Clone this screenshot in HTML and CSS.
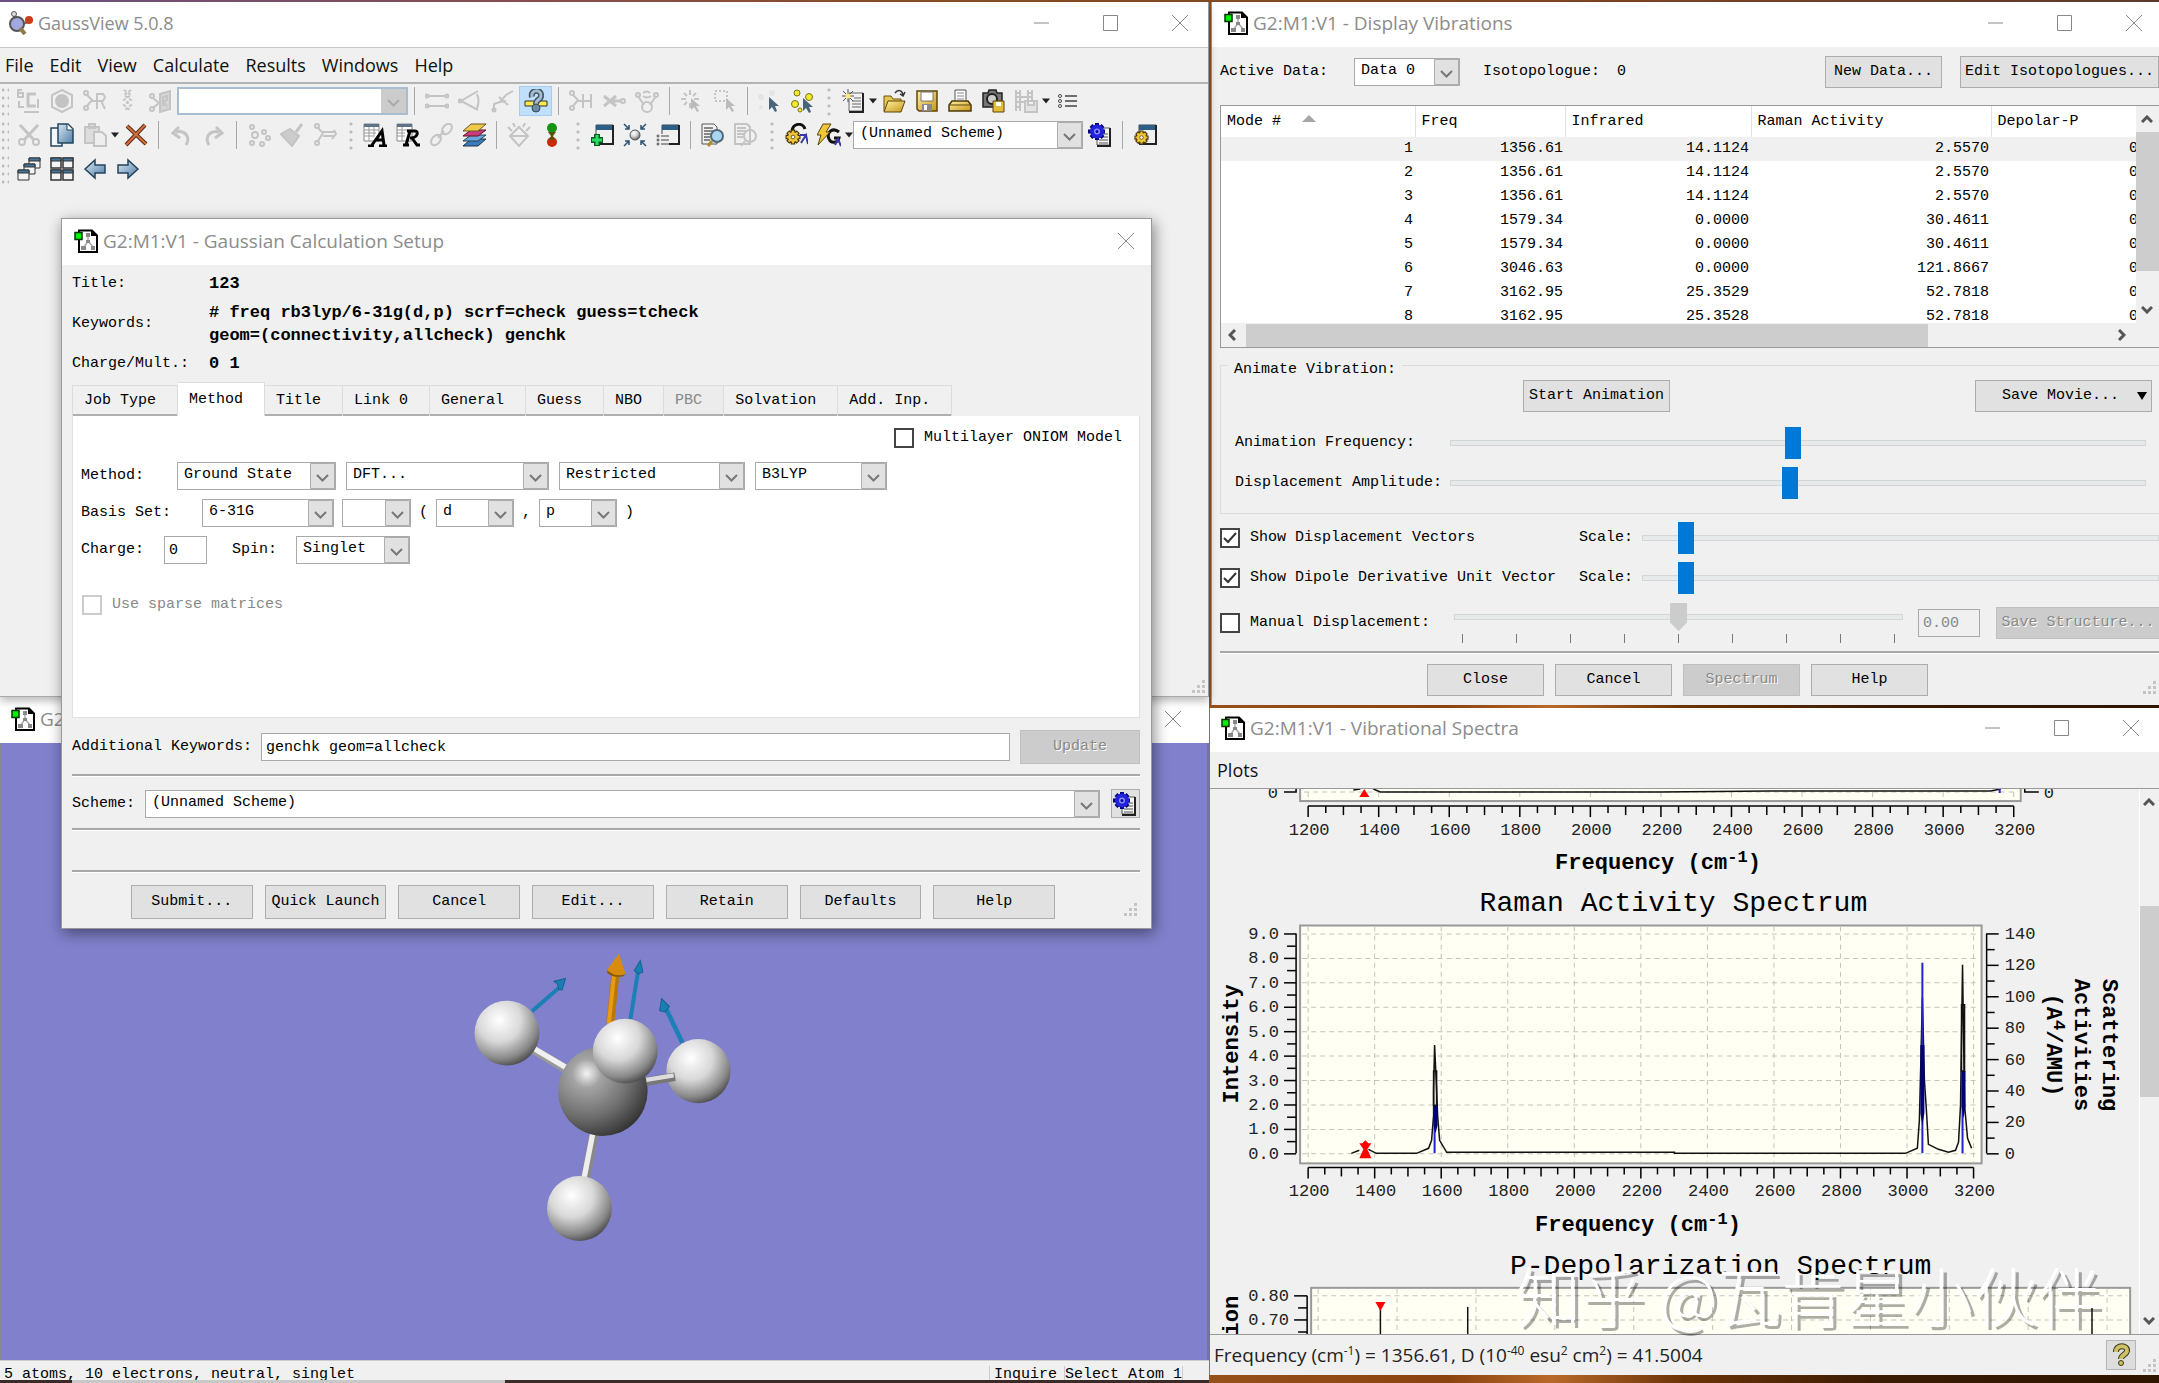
FILE: index.html
```html
<!DOCTYPE html>
<html lang="en">
<head>
<meta charset="utf-8">
<title>GaussView 5.0.8</title>
<link rel="stylesheet" href="styles.css">
</head>
<body>
<svg class="defs" aria-hidden="true">
  <defs>
    <radialGradient id="hyd" cx=".38" cy=".3" r=".75"><stop offset="0" stop-color="#fff"/><stop offset=".45" stop-color="#d8d8d8"/><stop offset=".8" stop-color="#888"/><stop offset="1" stop-color="#444"/></radialGradient>
    <radialGradient id="car" cx=".32" cy=".3" r=".8"><stop offset="0" stop-color="#f4f4f4"/><stop offset=".2" stop-color="#a4a4a4"/><stop offset=".6" stop-color="#707070"/><stop offset="1" stop-color="#2c2c2c"/></radialGradient>
    <linearGradient id="blue" x2="1" y2="1"><stop offset="0" stop-color="#dbe7f3"/><stop offset="1" stop-color="#4f7fa8"/></linearGradient>
    <linearGradient id="gold" x2="1" y2="1"><stop offset="0" stop-color="#fff2a0"/><stop offset="1" stop-color="#c9951c"/></linearGradient>
  </defs>
  <symbol id="doc" viewBox="0 0 24 24"><path d="M5 1.500h13l5 5V23H5z" fill="#fff" stroke="#000" stroke-width="2"/><path d="M17 1l6 6h-6z" fill="#000"/><path d="M14 6v7M14 12l-4 6M14 12l5 6" stroke="#aaa" stroke-width="1.500"/><path d="M12 4h4v4h-4zM12 11h4v3h-4zM7 17h5v4H7zM17 17h4v4h-4z" fill="#888"/><path d="M1 3.500h7v7H1z" fill="#0e0" stroke="#030" stroke-width="1.500"/></symbol>
  <symbol id="gear" viewBox="0 0 24 24"><path d="M12 2v20M2 12h20M5 5l14 14M19 5L5 19" stroke="#43360a" stroke-width="6"/><circle cx="12" cy="12" r="8" fill="#43360a"/><path d="M12 3.500v17M3.500 12h17M6 6l12 12M18 6L6 18" stroke="#e8bc2c" stroke-width="3"/><circle cx="12" cy="12" r="6.500" fill="#f0c63a"/><circle cx="12" cy="12" r="2.500" fill="#fff" stroke="#43360a"/></symbol>
  <symbol id="scheme" viewBox="0 0 24 24"><path d="M9 5h13v17H9z" fill="#f4f4f4" stroke="#555"/><path d="M22 5v18H9" fill="none" stroke="#222" stroke-width="2"/><path d="M11 11h9M11 14h9M11 17h9M11 20h9" stroke="#555"/><path d="M9 0v17M0 8.500h17M3 2.500l12 12M15 2.500l-12 12" stroke="#00007c" stroke-width="4"/><circle cx="9" cy="8.500" r="7" fill="#2222dd"/><circle cx="9" cy="8.500" r="3" fill="#8d8dff"/><circle cx="9" cy="8.500" r="1.500" fill="#0000a0"/></symbol>
  <symbol id="win" viewBox="0 0 24 24"><path d="M6 2h17v19H6z" fill="#f1f1f1" stroke="#444"/><path d="M6 2h17v5H6z" fill="#2d5f86"/><path d="M23 2v19H6" fill="none" stroke="#222" stroke-width="2"/></symbol>
  <symbol id="min" viewBox="0 0 16 16"><path d="M0 8h15" stroke="#888"/></symbol>
  <symbol id="max" viewBox="0 0 16 16"><path d="M.5.5h14v15H.5z" fill="none" stroke="#888"/></symbol>
  <symbol id="close" viewBox="0 0 16 16"><path d="M0 0l16 16M16 0L0 16" stroke="#888"/></symbol>
  <symbol id="grip" viewBox="0 0 14 14"><path d="M10 0h3v3h-3zM10 5h3v3h-3zM5 5h3v3H5zM10 10h3v3h-3zM5 10h3v3H5zM0 10h3v3H0z" fill="#c4c4c4"/></symbol>
  <symbol id="down" viewBox="0 0 10 8"><path d="M0 1h10L5 7z" fill="#222"/></symbol>
</svg>

<main class="desktop">
  <div class="column left-column">
    <section class="window main-window">
      <header class="titlebar">
        <svg class="app-icon" viewBox="0 0 24 24"><path d="M5 4l3 5M14 13l7-3" stroke="#666" stroke-width="2"/><circle cx="5" cy="3" r="2.500" fill="#ddd" stroke="#555"/><circle cx="8" cy="13" r="7" fill="#a3a8e0" stroke="#555" stroke-width="2"/><circle cx="20" cy="9" r="4" fill="#c93d17"/><path d="M11 17l5 6" stroke="#8d7a48" stroke-width="4"/></svg>
        <h1>GaussView 5.0.8</h1>
        <div class="controls"><button aria-label="Minimize"><svg><use href="#min"/></svg></button><button aria-label="Maximize"><svg><use href="#max"/></svg></button><button aria-label="Close"><svg><use href="#close"/></svg></button></div>
      </header>
      <nav class="menubar"><button>File</button><button>Edit</button><button>View</button><button>Calculate</button><button>Results</button><button>Windows</button><button>Help</button></nav>
      <div class="toolbars">
        <div class="toolbar">
          <i class="handle first"></i>
          <button class="tool off" aria-label="Element"><svg viewBox="0 0 24 24"><path d="M5 1H1v7h5V4H1"/><path d="M19 5h-8v12h8" stroke-width="3"/><path d="M2 12v7M2 18h5M21 10v9M7 23h15"/></svg></button>
          <button class="tool off" aria-label="Ring"><svg viewBox="0 0 24 24"><path d="M12 1l10 5v12l-10 5-10-5V6z"/><circle cx="12" cy="12" r="6" fill="#c4c4c4"/></svg></button>
          <button class="tool off" aria-label="R group"><svg viewBox="0 0 24 24"><circle cx="3" cy="4" r="2"/><circle cx="3" cy="19" r="2"/><path d="M4 6l5 5-5 6M8 12h5M14 20V5h6l2 3-2 4h-6M18 12l4 8"/></svg></button>
          <button class="tool off" aria-label="Fragment"><svg viewBox="0 0 24 24"><path d="M8 1l7 5-7 5 7 5-7 6M15 1L8 6l7 5-7 5 7 6" stroke-dasharray="3 2"/></svg></button>
          <button class="tool off" aria-label="Library"><svg viewBox="0 0 24 24"><path d="M11 5l10-3v18l-10 3z" fill="#d5d5d5"/><circle cx="3" cy="7" r="2"/><circle cx="3" cy="20" r="2"/><path d="M4 9l6 5-6 5M14 17V8l4-1v4l-4 2 4 4"/></svg></button>
          <select class="combo fragment" aria-label="Fragment name" disabled><option></option></select>
          <i class="sep"></i>
          <button class="tool off" aria-label="Bond"><svg viewBox="0 0 24 24"><circle cx="2" cy="7" r="1.500"/><circle cx="22" cy="7" r="1.500"/><circle cx="2" cy="17" r="1.500"/><circle cx="22" cy="17" r="1.500"/><path d="M4 7h16M4 17h16"/></svg></button>
          <button class="tool off" aria-label="Angle"><svg viewBox="0 0 24 24"><path d="M20 2L3 12l17 9M19 5q3 7 0 14"/><circle cx="2" cy="12" r="1.500"/></svg></button>
          <button class="tool off" aria-label="Dihedral"><svg viewBox="0 0 24 24"><path d="M3 21V15l6-2 6-7 7-4M8 8l9 8M9 13l6-1"/><circle cx="3" cy="21" r="1.500"/></svg></button>
          <button class="tool active" aria-label="Inquire"><svg viewBox="0 0 24 24"><path d="M1 12h22v5H1z" fill="#ffe94b" stroke="#333"/><path d="M8 8c-2-8 10-8 9-1 0 4-5 3-5 8" fill="none" stroke="#3d5568" stroke-width="6"/><path d="M8 8c-2-8 10-8 9-1 0 4-5 3-5 8" fill="none" stroke="#a9bccb" stroke-width="3"/><circle cx="12" cy="19" r="4" fill="#6d8ba3" stroke="#31485a"/></svg></button>
          <i class="sep"></i>
          <button class="tool off" aria-label="Add valence"><svg viewBox="0 0 24 24"><circle cx="3" cy="4" r="2"/><circle cx="3" cy="19" r="2"/><path d="M4 6l5 5-5 6M8 12h5M14 5v14M22 5v14M14 12h8"/></svg></button>
          <button class="tool off" aria-label="Delete atom"><svg viewBox="0 0 24 24"><path d="M2 7l12 10M14 7L2 17M8 12h11" stroke-width="3"/><circle cx="21" cy="12" r="2"/></svg></button>
          <button class="tool off" aria-label="Invert"><svg viewBox="0 0 24 24"><path d="M3 7l6 9M21 7l-6 9M8 4q4-3 7 0M16 7q-4 3-8 0"/><circle cx="3" cy="6" r="2"/><circle cx="21" cy="6" r="2"/><circle cx="12" cy="18" r="5"/></svg></button>
          <i class="sep"></i>
          <button class="tool off" aria-label="Select atom"><svg viewBox="0 0 24 24"><path d="M10 1v5M10 14v5M1 10h5M14 10h5M4 4l3 3M16 4l-3 3M4 16l3-3"/><path d="M11 9v12l3-3 3 5 2-1-3-5h4z" fill="#bbb" stroke="none"/></svg></button>
          <button class="tool off" aria-label="Select area"><svg viewBox="0 0 24 24"><path d="M2 2h12v10H2z" stroke-dasharray="2 2"/><path d="M13 9v12l3-3 3 5 2-1-3-5h4z" fill="#bbb" stroke="none"/></svg></button>
          <i class="sep"></i>
          <button class="tool" aria-label="Deselect atoms"><svg viewBox="0 0 24 24"><circle cx="3" cy="8" r="3" fill="#e4e4e4"/><circle cx="14" cy="4" r="3" fill="#e4e4e4"/><circle cx="3" cy="18" r="2" fill="#e4e4e4"/><path d="M11 8v13l3-3 3 5 2-1-2-5h4z" fill="#48647b"/></svg></button>
          <button class="tool" aria-label="Select all"><svg viewBox="0 0 24 24"><g fill="#f3ea2c" stroke="#77731c"><circle cx="6" cy="4" r="3"/><circle cx="18" cy="8" r="3.500"/><circle cx="4" cy="15" r="3.500"/><circle cx="9" cy="21" r="2"/></g><path d="M12 9v13l3-3 3 5 2-1-2-5h4z" fill="#48647b"/></svg></button>
          <i class="handle"></i>
          <button class="tool" aria-label="New"><svg viewBox="0 0 24 24"><path d="M8 4h14v18H8z" fill="#f2f2f2" stroke="#666"/><path d="M22 4v19H8" fill="none" stroke="#222" stroke-width="2"/><path d="M13 9h7M11 12h9M11 15h9M11 18h9" stroke="#666"/><path d="M7 0v13M1 7h12M2 2l10 10M12 2L2 12" stroke="#555"/><circle cx="7" cy="7" r="2.500" fill="#ffe97b"/></svg></button>
          <svg class="drop"><use href="#down"/></svg>
          <button class="tool" aria-label="Open"><svg viewBox="0 0 24 24"><path d="M2 7h7l2 3h8v12H2z" fill="#e6c550" stroke="#6b520c"/><path d="M6 12h17l-4 11H2z" fill="url(#gold)" stroke="#5b4508"/><path d="M13 4c3-4 7-3 8 2M18 5l3 2 2-4" fill="none" stroke="#333" stroke-width="1.500"/></svg></button>
          <button class="tool" aria-label="Save"><svg viewBox="0 0 24 24"><path d="M2 2h20v20H4l-2-2z" fill="url(#gold)" stroke="#5b4508" stroke-width="1.500"/><path d="M6 3h12v9H6z" fill="#fff" stroke="#777"/><path d="M7 15h10v7H7z" fill="#888"/><path d="M9 16h3v5H9z" fill="#fff"/></svg></button>
          <button class="tool" aria-label="Print"><svg viewBox="0 0 24 24"><path d="M7 1h11v13H7z" fill="#fff" stroke="#555"/><path d="M9 4h7M9 7h7M9 10h7" stroke="#888"/><path d="M4 12h16l3 4v6H1v-6z" fill="url(#gold)" stroke="#4b3a0a" stroke-width="1.500"/><path d="M2 16h20" stroke="#5b4508"/></svg></button>
          <button class="tool" aria-label="Save image"><svg viewBox="0 0 24 24"><path d="M2 4h5l1-3h7l1 3h5v14H2z" fill="#777" stroke="#222" stroke-width="1.500"/><circle cx="11" cy="10" r="5" fill="#ccc" stroke="#222" stroke-width="2"/><path d="M12 12h11v11H12z" fill="#e4bd3a" stroke="#5b4508"/><path d="M15 13h5v4h-5z" fill="#fff"/></svg></button>
          <button class="tool off" aria-label="Save movie"><svg viewBox="0 0 24 24"><path d="M2 1v21M6 1v21M14 1v12M18 1v10M2 4h4M2 8h16M2 13h9M2 18h4M14 4h4"/><path d="M11 12h12v11H11zM14 12v4h6v-4" fill="#e4e4e4"/></svg></button>
          <svg class="drop"><use href="#down"/></svg>
          <button class="tool" aria-label="Preferences"><svg viewBox="0 0 24 24"><path d="M10 7h12M10 12h12M10 17h12" stroke="#444" stroke-width="1.500"/><g fill="#fff" stroke="#444"><circle cx="5" cy="7" r="1.500"/><circle cx="5" cy="12" r="1.500"/><circle cx="5" cy="17" r="1.500"/></g></svg></button>
        </div>
        <div class="toolbar">
          <i class="handle first"></i>
          <button class="tool off" aria-label="Cut"><svg viewBox="0 0 24 24"><path d="M3 2l14 15M21 2L7 17" stroke-width="3"/><circle cx="5" cy="19" r="3"/><circle cx="19" cy="19" r="3"/></svg></button>
          <button class="tool" aria-label="Copy"><svg viewBox="0 0 24 24"><path d="M1 5h11v18H1z" fill="#f3f8fc" stroke="#24435c" stroke-width="1.500"/><path d="M8 1h10l5 5v14H8z" fill="url(#blue)" stroke="#24435c" stroke-width="1.500"/><path d="M17 1v6h6" fill="#fff" stroke="#24435c"/></svg></button>
          <button class="tool off" aria-label="Paste"><svg viewBox="0 0 24 24"><path d="M2 4h14v16H2zM6 1h6v4H6z" fill="#ddd"/><path d="M11 9h8l4 4v10H11z" fill="#eee"/></svg></button>
          <svg class="drop"><use href="#down"/></svg>
          <button class="tool" aria-label="Delete"><svg viewBox="0 0 24 24"><path d="M3 3l19 18M21 2L2 22" stroke="#5d2c14" stroke-width="4"/><path d="M3 3l19 18M21 2L2 22" stroke="#d0703f" stroke-width="2"/></svg></button>
          <i class="sep"></i>
          <button class="tool off" aria-label="Undo"><svg viewBox="0 0 24 24"><path d="M17 22c5-8-1-15-10-13M10 4L4 10l7 5" stroke-width="3"/></svg></button>
          <button class="tool off" aria-label="Redo"><svg viewBox="0 0 24 24"><path d="M7 22C2 14 8 7 17 9M14 4l6 6-7 5" stroke-width="3"/></svg></button>
          <i class="sep"></i>
          <button class="tool off" aria-label="Clean"><svg viewBox="0 0 24 24"><circle cx="5" cy="4" r="2"/><circle cx="8" cy="12" r="3"/><circle cx="17" cy="9" r="2"/><circle cx="21" cy="15" r="2"/><circle cx="5" cy="20" r="2"/><circle cx="15" cy="21" r="2"/></svg></button>
          <button class="tool off" aria-label="Brush"><svg viewBox="0 0 24 24"><path d="M22 1l-6 8" stroke-width="3"/><path d="M10 6l9 7-7 10L1 11z" fill="#ccc"/></svg></button>
          <button class="tool off" aria-label="Symmetrize"><svg viewBox="0 0 24 24"><circle cx="4" cy="3" r="2"/><circle cx="4" cy="20" r="2"/><path d="M5 5l5 5-5 8M10 9h11M10 13h11M21 7l2 4-4 5"/></svg></button>
          <i class="handle"></i>
          <button class="tool" aria-label="Atom list"><svg viewBox="0 0 24 24"><path d="M1 1h15v17H1z" fill="#fff" stroke="#888"/><path d="M1 1h15v3H1z" fill="#5f7386"/><path d="M1 7h15M1 10h12M1 13h11M6 4v14M11 4v8" stroke="#999"/><path d="M5 23h6M9 22L19 8l2 14M12 17h9M16 23h8" stroke="#000" stroke-width="3" fill="none"/></svg></button>
          <button class="tool" aria-label="Redundant coordinates"><svg viewBox="0 0 24 24"><path d="M1 1h15v17H1z" fill="#fff" stroke="#888"/><path d="M1 1h15v3H1z" fill="#5f7386"/><path d="M1 7h15M1 10h8M1 13h8M6 4v14" stroke="#999"/><path d="M10 22l4-14h5c4 0 3 7-5 7M16 15l5 7h3M7 22h6M11 8h4" stroke="#000" stroke-width="3" fill="none"/></svg></button>
          <button class="tool off" aria-label="Connection"><svg viewBox="0 0 24 24"><ellipse cx="18" cy="6" rx="4" ry="6" transform="rotate(40 18 6)"/><ellipse cx="7" cy="17" rx="4" ry="6" transform="rotate(40 7 17)"/><path d="M9 15l6-7"/></svg></button>
          <button class="tool" aria-label="MO layers"><svg viewBox="0 0 24 24"><path d="M9 16h15l-8 7H1z" fill="#3b7bbb" stroke="#234"/><path d="M9 12h15l-8 6H1z" fill="#6ba5dc" stroke="#245"/><path d="M9 7h15l-8 6H1z" fill="#c93d7e" stroke="#612"/><path d="M9 1h15l-8 7H1z" fill="#eeca48" stroke="#652"/></svg></button>
          <i class="sep"></i>
          <button class="tool off" aria-label="Symmetry"><svg viewBox="0 0 24 24"><path d="M12 4l9 9-9 10-9-10zM3 13h18M1 4l4 4M23 4l-4 4M6 0l2 4M18 0l-2 4"/></svg></button>
          <button class="tool" aria-label="Orbitals"><svg viewBox="0 0 24 24"><circle cx="12" cy="5" r="5" fill="#149414"/><circle cx="12" cy="19" r="5" fill="#c92a0c"/><path d="M8 9h8l-3 4 2 4H9l2-4z" fill="#58520c"/></svg></button>
          <i class="handle"></i>
          <button class="tool" aria-label="Add view"><svg viewBox="0 0 24 24"><use href="#win"/><path d="M7 11v12M1 17h12" stroke="#075a20" stroke-width="6"/><path d="M7 12v10M2 17h10" stroke="#2bdc65" stroke-width="3"/></svg></button>
          <button class="tool" aria-label="Center"><svg viewBox="0 0 24 24"><circle cx="12" cy="12" r="5" fill="url(#hyd)" stroke="#555"/><path d="M1 1l5 5M23 1l-5 5M1 23l5-5M23 23l-5-5M6 2v4H2M18 2v4h4M6 22v-4H2M18 22v-4h4" stroke="#2d5270" stroke-width="1.500" fill="none"/></svg></button>
          <button class="tool" aria-label="View list"><svg viewBox="0 0 24 24"><use href="#win"/><path d="M0 11h13v13H0z" fill="#efefef"/><path d="M5 13h8M5 17h8M5 21h8" stroke="#444"/><g fill="#fff" stroke="#444"><circle cx="2" cy="13" r="1"/><circle cx="2" cy="17" r="1"/><circle cx="2" cy="21" r="1"/></g></svg></button>
          <i class="sep"></i>
          <button class="tool" aria-label="View file"><svg viewBox="0 0 24 24"><path d="M1 1h12l3 3v17H1z" fill="#f2f2f2" stroke="#555"/><path d="M3 5h9M3 8h10M3 11h8M3 14h6M3 17h6" stroke="#666" stroke-width="1.500"/><circle cx="16" cy="13" r="6" fill="#a9d6ee" stroke="#51697b" stroke-width="2"/><path d="M11 18l-4 5" stroke="#b08c26" stroke-width="3"/></svg></button>
          <button class="tool off" aria-label="View results"><svg viewBox="0 0 24 24"><path d="M1 1h12l3 3v17H1zM3 5h9M3 8h10M3 11h8M3 14h6"/><circle cx="16" cy="13" r="6"/><path d="M11 18l-4 5"/></svg></button>
          <i class="handle"></i>
          <button class="tool" aria-label="Calculation setup"><svg viewBox="0 0 24 24"><path d="M21 6C19-1 9 0 8 8" fill="none" stroke="#111" stroke-width="3"/><svg y="5" width="18" height="18"><use href="#gear"/></svg><path d="M16 12h7M17 20l5-8 2 9" fill="none" stroke="#3738a8" stroke-width="2"/></svg></button>
          <button class="tool" aria-label="Quick launch"><svg viewBox="0 0 24 24"><path d="M22 9c-6-5-13 0-10 7 2 5 9 4 10-1h-5" fill="none" stroke="#111" stroke-width="3"/><path d="M6 1h8l-5 8h4L1 22l3-10H0z" fill="#f0c63a" stroke="#5b4508"/><path d="M18 22l3-6 3 7" fill="none" stroke="#3738a8" stroke-width="2"/></svg></button>
          <svg class="drop"><use href="#down"/></svg>
          <select class="combo toolbar-scheme" aria-label="Scheme"><option>(Unnamed Scheme)</option></select>
          <button class="tool" aria-label="Edit schemes"><svg><use href="#scheme"/></svg></button>
          <i class="sep"></i>
          <button class="tool" aria-label="Jobs"><svg viewBox="0 0 24 24"><use href="#win"/><svg y="6" width="17" height="17"><use href="#gear"/></svg></svg></button>
        </div>
        <div class="toolbar">
          <i class="handle first"></i>
          <button class="tool" aria-label="Cascade"><svg viewBox="0 0 24 24"><g fill="#f4f4f4" stroke="#333"><path d="M12 1h11v10H12z"/><path d="M7 7h11v10H7z"/><path d="M1 13h11v10H1z"/></g><path d="M12 1h11v3H12zM7 7h11v3H7zM1 13h11v3H1z" fill="#44769c" stroke="#333"/></svg></button>
          <button class="tool" aria-label="Tile"><svg viewBox="0 0 24 24"><path d="M1 1h10v10H1zM13 1h10v10H13zM1 13h10v10H1zM13 13h10v10H13z" fill="#f4f4f4" stroke="#333" stroke-width="1.500"/><path d="M1 1h10v3H1zM13 1h10v3H13zM1 13h10v3H1zM13 13h10v3H13z" fill="#44769c" stroke="#333"/></svg></button>
          <button class="tool" aria-label="Previous"><svg viewBox="0 0 24 24"><path d="M2 12l10-9v5h10v8H12v5z" fill="url(#blue)" stroke="#24435c" stroke-width="1.500"/></svg></button>
          <button class="tool" aria-label="Next"><svg viewBox="0 0 24 24"><path d="M22 12L12 3v5H2v8h10v5z" fill="url(#blue)" stroke="#24435c" stroke-width="1.500"/></svg></button>
        </div>
      </div>
      <svg class="size-grip"><use href="#grip"/></svg>
    </section>

    <section class="window view-window">
      <header class="titlebar">
        <svg class="app-icon"><use href="#doc"/></svg>
        <h2>G2</h2>
        <div class="controls"><button aria-label="Close"><svg><use href="#close"/></svg></button></div>
      </header>
      <div class="scene">
        <svg viewBox="0 0 1209 616" preserveAspectRatio="xMidYMid slice" role="img" aria-label="Methane molecule">
          <svg x="440" y="185" width="320" height="330" viewBox="0 0 960 990">
            <path d="M278 248l80-70" stroke="#1c7fb5" stroke-width="12"/><path d="M378 150l-34 8 10 8 4 16 10 2z" fill="#1a7eb5" stroke="#13628f" stroke-width="3"/>
            <path d="M572 275l24-150" stroke="#1c7fb5" stroke-width="12"/><path d="M602 96l-18 30 12 10 14-6z" fill="#1a7eb5" stroke="#13628f" stroke-width="3"/>
            <path d="M728 342l-50-104" stroke="#1c7fb5" stroke-width="14"/><path d="M666 210l-6 36 16 4 13-16z" fill="#1a7eb5" stroke="#13628f" stroke-width="3"/>
            <path d="M512 284l16-150" stroke="#b87708" stroke-width="24"/><path d="M508 284l16-150" stroke="#e89a12" stroke-width="12"/><path d="M538 76l-36 48q26 24 56 12z" fill="#d88c0e"/><path d="M502 124q26 24 56 12l-8 8q-30 4-46-10z" fill="#8b5900"/>
            <path d="M278 360l100 60" stroke="#999" stroke-width="26"/><path d="M280 357l98 58" stroke="#f0f0f0" stroke-width="16"/>
            <path d="M464 612l-26 134" stroke="#888" stroke-width="28"/><path d="M460 612l-26 134" stroke="#eee" stroke-width="16"/>
            <circle cx="490" cy="487" r="134" fill="url(#car)"/>
            <circle cx="203" cy="313" r="97" fill="url(#hyd)"/>
            <circle cx="776" cy="427" r="96" fill="url(#hyd)"/>
            <path d="M620 458l86-14" stroke="#777" stroke-width="26"/><path d="M620 453l82-13" stroke="#ddd" stroke-width="13"/>
            <circle cx="557" cy="367" r="97" fill="url(#hyd)"/>
            <circle cx="420" cy="838" r="97" fill="url(#hyd)"/>
          </svg>
        </svg>
      </div>
      <footer class="statusbar"><span class="atoms">5 atoms, 10 electrons, neutral, singlet</span><span class="inquire">Inquire</span><span class="selection">Select Atom 1</span></footer>
    </section>
  </div>

  <div class="column right-column">
    <section class="window vib-window">
      <header class="titlebar">
        <svg class="app-icon"><use href="#doc"/></svg>
        <h2>G2:M1:V1 - Display Vibrations</h2>
        <div class="controls"><button aria-label="Minimize"><svg><use href="#min"/></svg></button><button aria-label="Maximize"><svg><use href="#max"/></svg></button><button aria-label="Close"><svg><use href="#close"/></svg></button></div>
      </header>
      <div class="vib-body">
        <div class="data-row">
          <label for="active-data">Active Data:</label>
          <select id="active-data" class="combo"><option>Data 0</option></select>
          <span class="isotope">Isotopologue:</span><output>0</output>
          <button class="btn new-data">New Data...</button>
          <button class="btn edit-iso">Edit Isotopologues...</button>
        </div>
        <div class="table-box">
          <div class="table-view">
            <table>
              <colgroup><col class="c-mode"><col class="c-freq"><col class="c-ir"><col class="c-raman"><col></colgroup>
              <thead><tr><th>Mode # <svg class="sort" viewBox="0 0 14 7"><path d="M0 7l7-7 7 7z" fill="#a6a6a6"/></svg></th><th>Freq</th><th>Infrared</th><th>Raman Activity</th><th>Depolar-P</th></tr></thead>
              <tbody>
                <tr class="current"><td>1</td><td>1356.61</td><td>14.1124</td><td>2.5570</td><td>0</td></tr>
                <tr><td>2</td><td>1356.61</td><td>14.1124</td><td>2.5570</td><td>0</td></tr>
                <tr><td>3</td><td>1356.61</td><td>14.1124</td><td>2.5570</td><td>0</td></tr>
                <tr><td>4</td><td>1579.34</td><td>0.0000</td><td>30.4611</td><td>0</td></tr>
                <tr><td>5</td><td>1579.34</td><td>0.0000</td><td>30.4611</td><td>0</td></tr>
                <tr><td>6</td><td>3046.63</td><td>0.0000</td><td>121.8667</td><td>0</td></tr>
                <tr><td>7</td><td>3162.95</td><td>25.3529</td><td>52.7818</td><td>0</td></tr>
                <tr><td>8</td><td>3162.95</td><td>25.3528</td><td>52.7818</td><td>0</td></tr>
              </tbody>
            </table>
          </div>
          <div class="vscroll"><svg viewBox="0 0 12 8"><path d="M1 7l5-5 5 5"/></svg><i class="table-thumb"></i><svg class="end" viewBox="0 0 12 8"><path d="M1 1l5 5 5-5"/></svg></div>
          <div class="hscroll"><svg viewBox="0 0 8 12"><path d="M7 1L2 6l5 5"/></svg><i></i><svg viewBox="0 0 8 12"><path d="M1 1l5 5-5 5"/></svg></div>
        </div>
        <fieldset>
          <legend>Animate Vibration:</legend>
          <div class="anim-row"><button class="btn start">Start Animation</button><button class="btn movie">Save Movie...<svg viewBox="0 0 10 10"><path d="M0 1h10L5 9z"/></svg></button></div>
          <div class="slide-row"><label for="freq">Animation Frequency:</label><input id="freq" type="range" min="0" max="1000" value="493"></div>
          <div class="slide-row"><label for="amp">Displacement Amplitude:</label><input id="amp" type="range" min="0" max="1000" value="488"></div>
        </fieldset>
        <div class="vector-row"><label class="check"><input type="checkbox" checked>Show Displacement Vectors</label><label for="s1">Scale:</label><input id="s1" type="range" min="0" max="100" value="7"></div>
        <div class="vector-row"><label class="check"><input type="checkbox" checked>Show Dipole Derivative Unit Vector</label><label for="s2">Scale:</label><input id="s2" type="range" min="0" max="100" value="7"></div>
        <div class="manual-row">
          <label class="check"><input type="checkbox">Manual Displacement:</label>
          <div class="ticked"><input type="range" aria-label="Manual displacement" value="50" disabled><div class="ticks"><i></i><i></i><i></i><i></i><i></i><i></i><i></i><i></i><i></i></div></div>
          <input class="field amount" type="text" aria-label="Displacement value" value="0.00" disabled>
          <button class="btn save-structure" disabled>Save Structure...</button>
        </div>
        <hr>
        <div class="vib-buttons"><button class="btn">Close</button><button class="btn">Cancel</button><button class="btn" disabled>Spectrum</button><button class="btn">Help</button></div>
      </div>
      <svg class="size-grip"><use href="#grip"/></svg>
    </section>

    <section class="window spectra-window">
      <header class="titlebar">
        <svg class="app-icon"><use href="#doc"/></svg>
        <h2>G2:M1:V1 - Vibrational Spectra</h2>
        <div class="controls"><button aria-label="Minimize"><svg><use href="#min"/></svg></button><button aria-label="Maximize"><svg><use href="#max"/></svg></button><button aria-label="Close"><svg><use href="#close"/></svg></button></div>
      </header>
      <nav class="menubar"><button>Plots</button></nav>
      <div class="plots">
        <svg id="charts" viewBox="0 0 930 543" preserveAspectRatio="xMidYMin slice" role="img" aria-label="Vibrational spectra"></svg>
        <div class="vscroll"><svg viewBox="0 0 12 8"><path d="M1 7l5-5 5 5"/></svg><i class="plot-thumb"></i><svg class="end" viewBox="0 0 12 8"><path d="M1 1l5 5 5-5"/></svg></div>
      </div>
      <footer class="spectra-status">
        <span>Frequency (cm<sup>-1</sup>) = 1356.61, D (10<sup>-40</sup> esu<sup>2</sup> cm<sup>2</sup>) = 41.5004</span>
        <button class="help" aria-label="Help"><svg viewBox="0 0 24 24"><path d="M7 9c0-8 12-7 11-1-1 4-6 4-6 8" fill="none" stroke="#3b370e" stroke-width="6"/><path d="M7 9c0-8 12-7 11-1-1 4-6 4-6 8" fill="none" stroke="#cdc16a" stroke-width="4"/><circle cx="12" cy="20" r="2.500" fill="#cdc16a" stroke="#3b370e"/></svg></button>
      </footer>
      <svg class="size-grip"><use href="#grip"/></svg>
    </section>
  </div>

  <section class="window dialog">
    <header class="titlebar">
      <svg class="app-icon"><use href="#doc"/></svg>
      <h2>G2:M1:V1 - Gaussian Calculation Setup</h2>
      <div class="controls"><button aria-label="Close"><svg><use href="#close"/></svg></button></div>
    </header>
    <div class="dialog-body">
      <dl class="summary">
        <dt>Title:</dt><dd>123</dd>
        <dt>Keywords:</dt><dd># freq rb3lyp/6-31g(d,p) scrf=check guess=tcheck<br>geom=(connectivity,allcheck) genchk</dd>
        <dt>Charge/Mult.:</dt><dd>0 1</dd>
      </dl>
      <div class="tabs" role="tablist"><button>Job Type</button><button class="selected">Method</button><button>Title</button><button>Link 0</button><button>General</button><button>Guess</button><button>NBO</button><button disabled>PBC</button><button>Solvation</button><button>Add. Inp.</button></div>
      <div class="panel">
        <label class="check oniom"><input type="checkbox">Multilayer ONIOM Model</label>
        <div class="form-row method-row"><label for="state">Method:</label><select id="state" class="combo w-state"><option>Ground State</option></select><select class="combo w-theory" aria-label="Theory"><option>DFT...</option></select><select class="combo w-spin" aria-label="Wavefunction"><option>Restricted</option></select><select class="combo w-func" aria-label="Functional"><option>B3LYP</option></select></div>
        <div class="form-row"><label class="basis-label" for="basis">Basis Set:</label><select id="basis" class="combo w-basis"><option>6-31G</option></select><select class="combo w-diffuse" aria-label="Diffuse"><option></option></select><span class="mark">(</span><select class="combo w-pol" aria-label="Polarization d"><option>d</option></select><span class="mark">,</span><select class="combo w-pol" aria-label="Polarization p"><option>p</option></select><span class="mark">)</span></div>
        <div class="form-row"><label class="charge-label" for="charge">Charge:</label><input id="charge" class="field charge" type="text" value="0"><label class="spin-label" for="spin">Spin:</label><select id="spin" class="combo w-mult"><option>Singlet</option></select></div>
        <label class="check sparse"><input type="checkbox" disabled>Use sparse matrices</label>
      </div>
      <div class="extra-row"><label for="extra">Additional Keywords:</label><input id="extra" class="field" type="text" value="genchk geom=allcheck"><button class="btn" disabled>Update</button></div>
      <hr>
      <div class="scheme-row"><label for="scheme-select">Scheme:</label><select id="scheme-select" class="combo"><option>(Unnamed Scheme)</option></select><button class="btn" aria-label="Edit schemes"><svg><use href="#scheme"/></svg></button></div>
      <hr>
      <hr class="low">
      <div class="dialog-buttons"><button class="btn">Submit...</button><button class="btn">Quick Launch</button><button class="btn">Cancel</button><button class="btn">Edit...</button><button class="btn">Retain</button><button class="btn">Defaults</button><button class="btn">Help</button></div>
    </div>
    <svg class="size-grip"><use href="#grip"/></svg>
  </section>

  <p class="watermark" lang="zh">知乎 @瓦肯星小伙伴</p>
</main>
<script src="charts.js"></script>
</body>
</html>
```
FILE: styles.css
```css
* { box-sizing: border-box; }
html, body { margin: 0; height: 100%; }
body {
  font: 15px/18px "Liberation Mono", monospace;
  color: #000;
  background: #3a2b29;
  overflow: hidden;
}
button, input, select { font: inherit; color: inherit; margin: 0; }
button { border: 0; background: none; padding: 0; }
h1, h2, p, dl, dd { margin: 0; }
svg { display: block; }
.defs { position: absolute; width: 0; height: 0; }

.desktop {
  position: relative;
  display: grid;
  grid-template-columns: 56% 44%;
  min-height: 100vh;
  padding-top: 2px;
  background: linear-gradient(90deg, #6c5285, #8a5050 25%, #8b4f22 45%, #7b4326 75%, #5c3a2a) top / 100% 2px no-repeat;
}
.column { display: flex; flex-direction: column; min-width: 0; }
.left-column { padding-bottom: 3px; background: linear-gradient(#c8c8c8, #c8c8c8) 72px 100% / 433px 3px no-repeat; }
.right-column {
  padding-bottom: 8px;
  gap: 3px;
  background: linear-gradient(90deg, #96501a, #8a4310 25%, #b8692a 36%, #6b3408 50%, #3b1c04 70%, #2e1500);
}

/* Windows */
.window { position: relative; display: flex; flex-direction: column; background: #f0f0f0; }
.titlebar { display: flex; align-items: center; height: 45px; background: #fff; flex: none; }
.titlebar h1, .titlebar h2 { font: 18px/24px "Open Sans", sans-serif; color: #8c8c8c; white-space: nowrap; }
.titlebar h2 { font-size: 19px; }
.app-icon { width: 24px; height: 24px; margin-right: 5px; }
.controls { display: flex; gap: 53px; margin-left: auto; }
.controls svg { width: 16px; height: 16px; }
.menubar { display: flex; gap: 16px; font: 18px/24px "Open Sans", sans-serif; color: #111; }
.size-grip { position: absolute; right: 2px; bottom: 10px; width: 14px; height: 14px; }

.main-window { flex: 694 1 0; border-right: 1px solid #999; border-bottom: 1px solid #aaa; box-shadow: 0 4px 8px #0004; z-index: 1; }
.main-window .titlebar { padding: 0 20px 3px 9px; }
.main-window .size-grip { bottom: 2px; }
.main-window .menubar { height: 37px; padding: 2px 5px; border-top: 1px solid #c8c8c8; border-bottom: 2px solid #b4b4b4; }
.toolbar { display: flex; align-items: center; height: 34px; }
.tool { width: 33px; height: 30px; display: flex; align-items: center; justify-content: center; flex: none; }
.tool > svg { width: 24px; height: 24px; }
.off svg { fill: none; stroke: #c4c4c4; stroke-width: 2px; }
.active { background: #bfdffa; border: 1px solid #a5cdf2; }
.drop { width: 8px; height: 8px; flex: none; }
.handle { width: 17px; height: 30px; flex: none; background: radial-gradient(circle, #bbb 1px, transparent 2px) 7px 0 / 6px 8px; background-clip: content-box; padding: 0 3px 0 7px; }
.handle.first { width: 12px; padding: 0 3px 0 2px; background-position: 0 0; }
.sep { width: 12px; height: 28px; flex: none; background: linear-gradient(#a8a8a8, #a8a8a8) center / 1px 100% no-repeat; }

.view-window { flex: 684 1 0; min-height: 0; }
.view-window .titlebar { height: 46px; padding: 0 28px 2px 11px; }
.scene { flex: 1; min-height: 0; background: #8080cc; border-left: 1px solid #888; border-right: 2px solid #7373aa; }
.scene svg { width: 100%; height: 100%; }
.scene svg svg { width: 320px; height: 330px; }
.statusbar { display: flex; height: 20px; padding: 5px 26px 0 4px; overflow: hidden; border-top: 1px solid #ccc; white-space: nowrap; }
.atoms { margin-right: auto; }
.inquire { padding: 0 2px 0 4px; border-left: 1px solid #ccc; margin-right: 5px; }
.selection { border-left: 1px solid #ccc; border-right: 1px solid #ccc; }

/* Controls */
.btn { height: 32px; background: #e1e1e1; border: 1px solid #adadad; text-align: center; white-space: nowrap; }
.btn:disabled { background: #ccc; border-color: #bfbfbf; color: #888; text-shadow: 1px 1px #fff; }
.combo {
  appearance: none;
  height: 28px;
  padding: 0 26px 2px 6px;
  border: 1px solid #a9a9a9;
  border-radius: 0;
  opacity: 1;
  background: #fff url("data:image/svg+xml,%3Csvg xmlns='http://www.w3.org/2000/svg' width='25' height='26'%3E%3Cpath d='M.5.5h24v25H.5z' fill='%23e1e1e1' stroke='%23adadad'/%3E%3Cpath d='M7 12l5.500 5.500L18 12' fill='none' stroke='%23777' stroke-width='2'/%3E%3C/svg%3E") right center no-repeat;
}
.fragment {
  width: 231px;
  border: 2px solid #a9bdd0;
  background-image: url("data:image/svg+xml,%3Csvg xmlns='http://www.w3.org/2000/svg' width='25' height='26'%3E%3Cpath d='M0 0h25v26H0z' fill='%23ccc'/%3E%3Cpath d='M7 12l5.500 5.500L18 12' fill='none' stroke='%23aaa' stroke-width='2'/%3E%3C/svg%3E");
}
.toolbar-scheme { width: 230px; }
.field { height: 28px; padding: 0 4px; border: 1px solid #a9a9a9; background: #fff; }
.field:disabled { background: #f0f0f0; color: #888; }
.check { display: flex; align-items: center; gap: 10px; }
.check input { appearance: none; width: 20px; height: 20px; border: 2px solid #444; background: #fff; }
.check input:disabled { border-color: #ccc; }
.check input:checked { background: #fff url("data:image/svg+xml,%3Csvg xmlns='http://www.w3.org/2000/svg' viewBox='0 0 16 16'%3E%3Cpath d='M2 8l4 4 8-9' fill='none' stroke='%23333' stroke-width='2'/%3E%3C/svg%3E") center / 16px no-repeat; }
input[type="range"] { appearance: none; width: 100%; height: 32px; background: none; }
input[type="range"]::-webkit-slider-runnable-track { height: 6px; background: #e7eaea; border: 1px solid #d4d6d6; }
input[type="range"]::-webkit-slider-thumb { appearance: none; width: 16px; height: 32px; margin-top: -14px; background: #0078d7; }
input[type="range"]:disabled::-webkit-slider-thumb { width: 17px; height: 28px; margin-top: -12px; background: #ccc; clip-path: polygon(0 0, 100% 0, 100% 70%, 50% 100%, 0 70%); }
hr { width: 100%; height: 3px; margin: 0; border: 0; border-top: 2px solid #a8a8a8; border-bottom: 1px solid #fff; }
.vscroll { display: flex; flex-direction: column; align-items: center; background: #f0f0f0; }
.vscroll svg, .hscroll svg { fill: none; stroke: #555; stroke-width: 3px; }
.vscroll svg { width: 12px; height: 8px; margin: 9px 0; }
.vscroll i, .hscroll i { background: #cdcdcd; }
.vscroll .end { margin-top: auto; }

/* Display Vibrations */
.vib-window { margin-left: 2px; border-left: 1px solid #999; overflow: hidden; }
.vib-window .titlebar { padding: 0 17px 3px 12px; }
.vib-body { padding: 9px 0 9px 8px; }
.data-row { display: flex; align-items: center; height: 32px; }
.data-row label { width: 134px; }
.data-row .combo { width: 106px; }
.isotope { margin: 0 17px 0 23px; }
.new-data { width: 117px; margin: 0 18px 0 auto; }
.edit-iso { width: 199px; }
.table-box { display: grid; grid-template: 217px 24px / 1fr 23px; margin-top: 17px; border: 1px solid #999; border-right: 0; background: #f0f0f0; }
.table-view { background: #fff; overflow: hidden; }
table { table-layout: fixed; width: calc(100% + 4px); border-collapse: collapse; }
.c-mode { width: 194px; }
.c-freq { width: 150px; }
.c-ir { width: 186px; }
.c-raman { width: 240px; }
th { height: 31px; padding: 0 6px; text-align: left; font-weight: 400; border-right: 1px solid #e0e0e0; }
th:last-child { border: 0; }
td { height: 24px; padding: 0 2px; text-align: right; }
.sort { display: inline-block; width: 14px; height: 7px; margin: 0 0 3px 12px; }
.current { background: #f0f0f0; }
.table-thumb { width: 100%; height: 139px; }
.hscroll { grid-column: 1; display: flex; align-items: center; justify-content: space-between; padding: 0 10px 0 7px; }
.hscroll svg { width: 8px; height: 12px; }
.hscroll i { height: 23px; flex: 0 0 76%; margin: 0 auto 0 10px; }
fieldset { min-width: 0; margin: 3px -2px 0 0; padding: 1px 2px 14px 0; border: 1px solid #dcdcdc; }
legend { padding: 10px 6px 0; margin-left: 7px; line-height: 18px; }
.anim-row { display: flex; justify-content: space-between; padding: 0 6px 0 302px; }
.start { width: 147px; }
.movie { display: flex; align-items: center; width: 177px; padding: 0 4px 0 26px; }
.movie svg { width: 10px; height: 10px; margin-left: auto; }
.slide-row { display: grid; grid-template-columns: 215px 1fr; align-items: center; height: 32px; padding: 0 12px 0 14px; margin-top: 8px; }
.anim-row + .slide-row { margin-top: 15px; }
.vector-row { display: grid; grid-template-columns: 359px 63px 1fr; align-items: center; height: 32px; margin-top: 8px; }
.manual-row { display: flex; align-items: center; height: 40px; margin: 9px 0 8px; }
.manual-row .check { width: 234px; }
.ticked { width: 449px; margin-right: 15px; }
.ticked input { display: block; height: 28px; }
.ticks { display: flex; justify-content: space-between; height: 9px; margin-top: 3px; padding: 0 8px; }
.ticks i { width: 1px; background: #777; }
.amount { width: 62px; margin-right: 16px; }
.save-structure { flex: 1; border-right: 0; }
.vib-buttons { display: flex; gap: 11px; margin: 10px 0 0 207px; }
.vib-buttons .btn { width: 117px; }

/* Vibrational Spectra */
.spectra-window { flex: 1; min-height: 0; border-left: 1px solid #777; }
.spectra-window .titlebar { height: 44px; padding: 0 20px 4px 11px; }
.spectra-window .menubar { height: 37px; padding: 2px 7px; border-bottom: 1px solid #999; }
.plots { flex: 1; min-height: 0; display: flex; border-bottom: 1px solid #999; }
.plots > svg { flex: 1; min-width: 0; height: 100%; }
.plots .vscroll { width: 20px; border-left: 1px solid #fff; }
.plot-thumb { width: 100%; height: 35%; margin-top: 91px; }
.spectra-status { display: flex; align-items: center; justify-content: space-between; height: 40px; padding: 0 23px 0 4px; font: 19px/24px "Open Sans", sans-serif; color: #222; white-space: nowrap; }
.spectra-status sup { font-size: 12px; line-height: 0; }
.spectra-window .size-grip { bottom: 2px; }
.help { width: 30px; height: 30px; padding: 2px; background: #ddd; border: 1px solid #b5b5b5; }
#charts text { font-size: 17px; fill: #222; }
#charts .axis-title { font-size: 22px; font-weight: 700; fill: #000; }
#charts .sup { font-size: 17px; }
#charts .chart-title { font-size: 28px; fill: #000; }
.grid { stroke: #c4c4bc; stroke-width: 1px; stroke-dasharray: 5 4; }
.frame { fill: #fffff4; stroke: #999; stroke-width: 2px; }
.axis { fill: none; stroke: #000; stroke-width: 1.5px; }
.curve { fill: none; stroke: #111; stroke-width: 1.5px; }
.stick { fill: none; stroke: #2222d0; stroke-width: 2px; }
.core { fill: #000078; }
.marker { fill: #f00; }

/* Gaussian Calculation Setup */
.dialog { position: absolute; left: 61px; top: 218px; z-index: 2; width: calc(56% - 118px); border: 1px solid #999; box-shadow: 2px 4px 14px #0007; }
.dialog .titlebar { height: 46px; padding: 0 17px 2px 12px; }
.dialog-body { padding: 10px 11px 9px 10px; }
.summary { display: grid; grid-template-columns: 137px 1fr; align-items: center; gap: 8px 0; }
.summary dd { font-size: 17px; font-weight: 700; line-height: 23px; }
.summary dt, .summary dd { min-height: 18px; }
.summary dd:not(:nth-of-type(2)) { line-height: 18px; }
.tabs { display: flex; align-items: flex-end; height: 34px; margin-top: 9px; }
.tabs button { height: 31px; padding: 0 21px 0 11px; border: 1px solid #dcdcdc; border-width: 1px 1px 0 0; box-shadow: 0 -2px #b0b0b0 inset; }
.tabs button:first-child { border-left-width: 1px; }
.tabs .selected { height: 34px; background: #fff; box-shadow: none; }
.tabs button:disabled { color: #888; background-color: #ececec; }
.panel { min-height: 302px; padding: 12px 17px 40px 8px; background: #fff; border: 1px solid #e0e0e0; border-top: 0; }
.oniom { justify-content: flex-end; }
.form-row { display: flex; align-items: center; margin-top: 9px; }
.method-row { gap: 10px; margin-top: 14px; }
.method-row label { width: 86px; }
.w-state { width: 159px; }
.w-theory { width: 203px; }
.w-spin { width: 186px; }
.w-func { width: 132px; }
.basis-label { width: 121px; }
.w-basis { width: 132px; margin-right: 8px; }
.w-diffuse { width: 69px; }
.w-pol { width: 78px; }
.mark { width: 25px; text-align: center; }
.charge-label { width: 83px; }
.charge { width: 43px; }
.spin-label { width: 64px; margin-left: 25px; }
.w-mult { width: 114px; }
.sparse { margin-top: 31px; padding-left: 1px; color: #888; }
.extra-row { display: grid; grid-template-columns: 189px 1fr 120px; align-items: center; margin: 12px 0 10px; }
.extra-row label { white-space: nowrap; }
.extra-row .field { margin-right: 10px; }
.extra-row .btn, .dialog-buttons .btn { height: 34px; }
.scheme-row { display: grid; grid-template-columns: 73px 1fr 29px; align-items: center; margin: 12px 0 10px; }
.scheme-row .combo { margin-right: 11px; }
.scheme-row .btn { height: 29px; padding: 1px; }
.scheme-row .btn svg { width: 24px; height: 24px; }
.low { margin-top: 39px; }
.dialog-buttons { display: grid; grid-template-columns: repeat(7, 1fr); gap: 12px; margin-top: 12px; padding: 0 85px 0 59px; }
.dialog .size-grip { right: 13px; bottom: 11px; }

.watermark {
  position: absolute;
  right: 58px;
  bottom: 50px;
  z-index: 3;
  font: 64px/80px "Noto Sans CJK SC", sans-serif;
  font-weight: 300;
  color: #fff;
  text-shadow: 4px 4px #00000052;
  white-space: nowrap;
}
```
FILE: charts.js
```js
// Draws the three visible spectra of the scrolled plot area.
const out = [];
const line = (x1, y1, x2, y2, cls) => out.push(`<path class="${cls}" d="M${x1} ${y1}L${x2} ${y2}"/>`);
const text = (x, y, s, anchor = 'middle', cls = '', turn = 0) =>
  out.push(`<text x="${x}" y="${y}" text-anchor="${anchor}" class="${cls}"${turn ? ` transform="rotate(${turn} ${x} ${y})"` : ''}>${s}</text>`);
const frame = (x, y, w, h) => out.push(`<rect class="frame" x="${x}" y="${y}" width="${w}" height="${h}"/>`);
const curve = (d, cls = 'curve') => out.push(`<path class="${cls}" d="${d}"/>`);

function frequencyAxis(y, x0, x1, title) {
  line(x0, y, x1, y, 'axis');
  for (let i = 0; i <= 40; i++) {
    const x = x0 + (x1 - x0) * i / 40;
    line(x, y, x, y + (i % 4 === 0 ? 11 : i % 2 === 0 ? 9 : 7), 'axis');
    if (i % 4 === 0) text(x + 1, y + 29, 1200 + i * 50);
  }
  text(title, y + 63, 'Frequency (cm<tspan class="sup" dy="-7">-1</tspan><tspan dy="7">)</tspan>', 'start', 'axis-title');
}

// Infrared spectrum, bottom edge
frame(92, -20, 718, 32);
line(96, 3, 806, 3, 'grid');
for (let i = 0; i <= 10; i++) line(100 + i * 70.3, -6, 100 + i * 70.3, 11, 'grid');
curve('M145 1L152 0M165 0L172 3H450L560 2H780L790 0');
curve('M789 0V4', 'stick');
curve('M156 0l5 8h-10z', 'marker');
curve('M76 3H88V-4M828 3H814V-4', 'axis');
text(70, 9, '0', 'end');
text(833, 9, '0', 'start');
frequencyAxis(17, 100, 803, 346);

// Raman activity spectrum
text(464, 122, 'Raman Activity Spectrum', 'middle', 'chart-title');
frame(92, 136, 679, 237);
for (let i = 0; i <= 10; i++) line(100 + i * 66.3, 137, 100 + i * 66.3, 372, 'grid');
line(88, 144, 88, 363, 'axis');
for (let i = 0; i <= 18; i++) {
  const y = 363.5 - i * 12.17;
  line(i % 2 ? 79 : 76, y, 88, y, 'axis');
  if (i % 2 === 0) {
    line(94, y, 766, y, 'grid');
    text(71, y + 5, (i / 2).toFixed(1), 'end');
  }
}
line(776, 144, 776, 363, 'axis');
for (let i = 0; i <= 14; i++) {
  const y = 363.5 - i * 15.65;
  line(776, y, i % 2 ? 784 : 788, y, 'axis');
  if (i % 2 === 0) text(794, y + 5, i * 10, 'start');
}
curve('M143 363l8-3M160 359l8 4H208L220 358 223 350 225 325V300L226 255 228 300 229 325 231 350 238 362H465V363H695L707 358 709 330 710 290 712 208 714 290 716 320 718 354 728 359 738 362 745 360 748 352 750 315 752 175 754 315 757 348 761 358');
curve('M226 363V315M712 363V173M752 363V281', 'stick');
curve('M225 315h4v20l-2 8-2-8zM710 255h4v68l-2 12-2-12zM751 281h4v35l-2 12-2-12z', 'core');
curve('M225 281h3v34h-3zM751 215h3v66h-3z');
curve('M151 353h3l3-3 3 3h3l-4 6 4 9h-12l4-9z', 'marker');
frequencyAxis(377, 100, 763, 326);
text(30, 254, 'Intensity', 'middle', 'axis-title', -90);
text(892, 255, 'Scattering', 'middle', 'axis-title', 90);
text(864, 255, 'Activities', 'middle', 'axis-title', 90);
text(836, 255, '(A<tspan class="sup" dy="-7">4</tspan><tspan dy="7">/AMU)</tspan>', 'middle', 'axis-title', 90);

// P-depolarization spectrum, top edge
text(511, 483, 'P-Depolarization Spectrum', 'middle', 'chart-title');
frame(103, 497, 816, 80);
for (let i = 0; i <= 10; i++) line(110 + i * 78.6, 498, 110 + i * 78.6, 543, 'grid');
line(99, 505, 99, 543, 'axis');
[['0.80', 505], ['0.70', 529]].forEach(([label, y]) => {
  line(86, y, 99, y, 'axis');
  line(90, y + 12, 99, y + 12, 'axis');
  line(105, y, 916, y, 'grid');
  text(81, y + 5, label, 'end');
});
line(172, 514, 172, 543, 'curve');
line(259, 516, 259, 543, 'curve');
line(881, 517, 881, 543, 'curve');
curve('M167 511h10l-5 9z', 'marker');
text(30, 505, 'ion', 'end', 'axis-title', -90);

document.getElementById('charts').innerHTML = out.join('');
```
